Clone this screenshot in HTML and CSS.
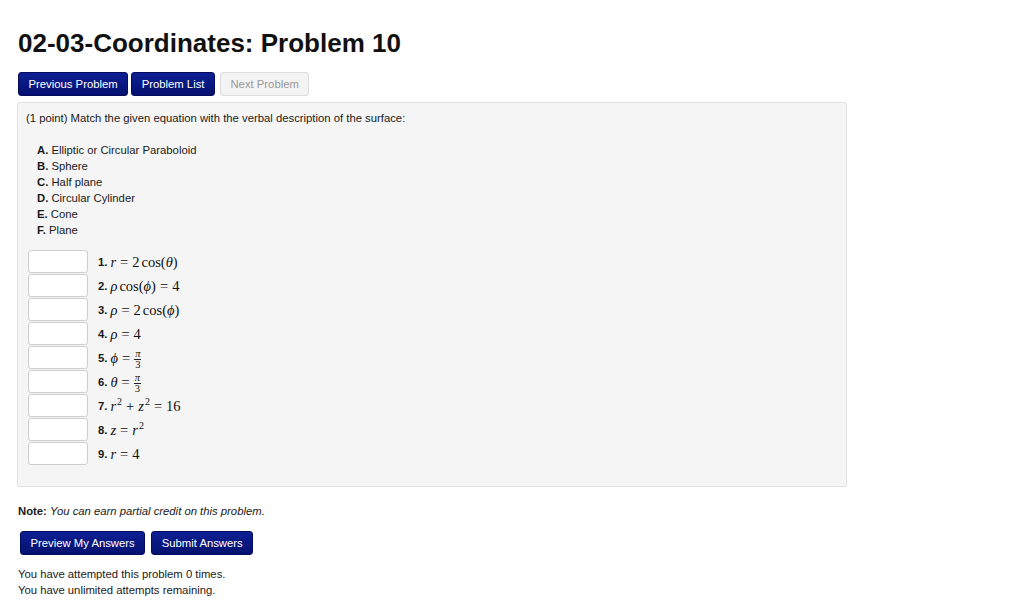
FILE: index.html
```html
<!DOCTYPE html>
<html>
<head>
<meta charset="utf-8">
<link rel="stylesheet" href="styles.css">
</head>
<body>
<h1 class="title">02-03-Coordinates: Problem 10</h1>
<div class="nav">
  <span class="btn primary">Previous Problem</span>
  <span class="btn primary">Problem List</span>
  <span class="btn disabled">Next Problem</span>
</div>
<div class="well">
  <p class="intro">(1 point) Match the given equation with the verbal description of the surface:</p>
  <div class="choices">
    <div><b>A.</b> Elliptic or Circular Paraboloid</div>
    <div><b>B.</b> Sphere</div>
    <div><b>C.</b> Half plane</div>
    <div><b>D.</b> Circular Cylinder</div>
    <div><b>E.</b> Cone</div>
    <div><b>F.</b> Plane</div>
  </div>
  <div class="rows">
    <div class="row"><span class="inp"></span><span class="lbl"><b>1.</b> <span class="m"><i>r</i><span class="op">=</span>2<span class="fn">cos</span>(<i>θ</i>)</span></span></div>
    <div class="row"><span class="inp"></span><span class="lbl"><b>2.</b> <span class="m"><i>ρ</i><span class="fn">cos</span>(<i>ϕ</i>)<span class="op">=</span>4</span></span></div>
    <div class="row"><span class="inp"></span><span class="lbl"><b>3.</b> <span class="m"><i>ρ</i><span class="op">=</span>2<span class="fn">cos</span>(<i>ϕ</i>)</span></span></div>
    <div class="row"><span class="inp"></span><span class="lbl"><b>4.</b> <span class="m"><i>ρ</i><span class="op">=</span>4</span></span></div>
    <div class="row"><span class="inp"></span><span class="lbl"><b>5.</b> <span class="m"><i>ϕ</i><span class="op">=</span><span class="frac"><span class="num"><i>π</i></span><span class="den">3</span></span></span></span></div>
    <div class="row"><span class="inp"></span><span class="lbl"><b>6.</b> <span class="m"><i>θ</i><span class="op">=</span><span class="frac"><span class="num"><i>π</i></span><span class="den">3</span></span></span></span></div>
    <div class="row"><span class="inp"></span><span class="lbl"><b>7.</b> <span class="m"><i>r</i><span class="sup">2</span><span class="op">+</span><i>z</i><span class="sup">2</span><span class="op">=</span>16</span></span></div>
    <div class="row"><span class="inp"></span><span class="lbl"><b>8.</b> <span class="m"><i>z</i><span class="op">=</span><i>r</i><span class="sup">2</span></span></span></div>
    <div class="row"><span class="inp"></span><span class="lbl"><b>9.</b> <span class="m"><i>r</i><span class="op">=</span>4</span></span></div>
  </div>
</div>
<p class="note"><b>Note:</b> <i>You can earn partial credit on this problem.</i></p>
<div class="submit">
  <span class="btn primary big">Preview My Answers</span>
  <span class="btn primary big">Submit Answers</span>
</div>
<p class="info">You have attempted this problem 0 times.<br>You have unlimited attempts remaining.</p>
</body>
</html>
```
FILE: styles.css
```css
html, body {
  margin: 0;
  padding: 0;
  background: #fff;
}
body {
  padding: 0 18px;
  font-family: "Liberation Sans", Arial, sans-serif;
  font-size: 11.3px;
  line-height: 16px;
  color: #1a1a1a;
}
.title {
  margin: 28px 0 14px;
  font-size: 26px;
  line-height: 30px;
  font-weight: bold;
  color: #111;
}
.nav {
  display: flex;
  height: 24px;
  margin-bottom: 6px;
}
.btn {
  display: inline-flex;
  align-items: center;
  justify-content: center;
  box-sizing: border-box;
  height: 24px;
  padding: 0 9.5px;
  border-radius: 3px;
  font-size: 11.3px;
  white-space: nowrap;
}
.btn.primary {
  color: #fff;
  background: linear-gradient(to bottom, #0e1f93, #04116f);
  border: 1px solid #030c5e;
}
.btn.disabled {
  color: #9a9a9a;
  background: #f3f3f3;
  border: 1px solid #dcdcdc;
}
.nav .btn + .btn { margin-left: 3px; }
.nav .btn.disabled { margin-left: 5px; }
.well {
  box-sizing: border-box;
  width: 830px;
  margin-left: -1px;
  padding: 7px 8px 20px 8px;
  background: #f5f5f5;
  border: 1px solid #e3e3e3;
  border-radius: 2px;
}
.intro {
  margin: 0 0 16px;
}
.choices {
  margin-left: 11px;
  margin-bottom: 12px;
}
.rows {
  margin-left: 2px;
  display: flex;
  flex-direction: column;
}
.row {
  display: flex;
  align-items: center;
  height: 24px;
}
.inp {
  box-sizing: border-box;
  width: 60px;
  height: 23px;
  background: #fff;
  border: 1px solid #cdcdcd;
  border-radius: 3px;
  margin-bottom: 1px;
}
.lbl {
  margin-left: 10px;
  display: inline-flex;
  align-items: center;
  white-space: nowrap;
}
.lbl b { margin-right: 3px; }
.m {
  font-family: "Liberation Serif", "Times New Roman", serif;
  font-size: 14.5px;
  display: inline-flex;
  align-items: center;
  color: #111;
}
.m i { font-style: italic; }
.op { margin: 0 4px; }
.fn { margin-left: 2px; }
.sup {
  font-size: 10px;
  line-height: 10px;
  position: relative;
  top: -4px;
  margin-left: 1px;
}
.frac {
  display: inline-flex;
  flex-direction: column;
  align-items: center;
  font-size: 10.5px;
  line-height: 10px;
  margin-top: 2px;
}
.frac .num {
  border-bottom: 1px solid #222;
  padding: 0 1px;
}
.note {
  margin: 16px 0 12px;
}
.submit {
  display: flex;
  margin-left: 2px;
  height: 24px;
}
.submit .btn + .btn { margin-left: 6px; }
.info {
  margin: 11px 0 0;
}
```
